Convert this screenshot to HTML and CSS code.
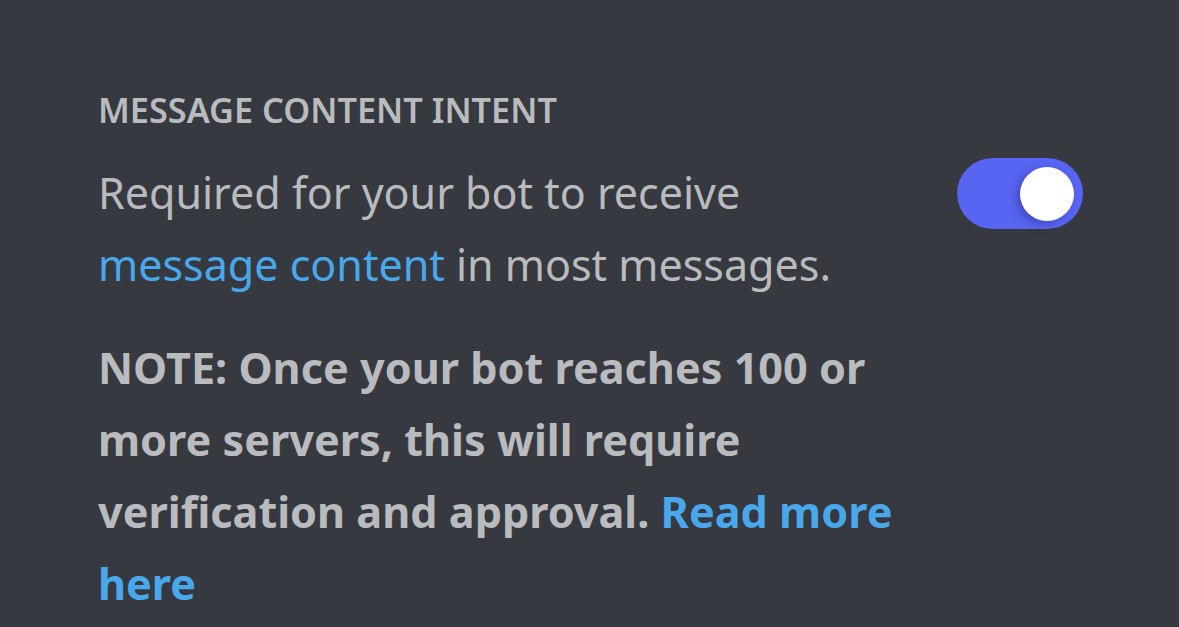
FILE: index.html
```html
<!DOCTYPE html>
<html>
<head>
<meta charset="utf-8">
<link rel="stylesheet" href="styles.css">
</head>
<body>
<div class="page">
  <h2 class="title">MESSAGE CONTENT INTENT</h2>
  <div class="row">
    <div class="text">
      <p class="desc">Required for your bot to receive <a class="link" href="#">message content</a> in most messages.</p>
      <p class="note">NOTE: Once your bot reaches 100 or more servers, this will require verification and approval. <a class="link" href="#">Read more here</a></p>
    </div>
    <div class="toggle"><div class="knob"></div></div>
  </div>
</div>
</body>
</html>
```
FILE: styles.css
```css
html, body {
  margin: 0;
  padding: 0;
  background: #36393f;
  height: 100%;
  overflow: hidden;
}
.page {
  padding: 88px 96px 0 98px;
  font-family: "Noto Sans", "Open Sans", sans-serif;
  color: #b9bbbe;
}
.title {
  margin: 0 0 25px 0;
  font-size: 34.3px;
  font-weight: 600;
  line-height: 44px;
  letter-spacing: 0;
}
.row {
  display: flex;
  justify-content: space-between;
  align-items: flex-start;
}
.text {
  width: 810px;
}
.desc {
  margin: 0 0 31px 0;
  font-size: 43px;
  line-height: 72px;
  font-weight: 400;
}
.note {
  margin: 0;
  font-size: 43.2px;
  line-height: 72px;
  font-weight: 700;
}
.link {
  color: #49a8ec;
  text-decoration: none;
}
.toggle {
  width: 126px;
  height: 71px;
  border-radius: 36px;
  background: #5865f2;
  display: flex;
  align-items: center;
  justify-content: flex-end;
  padding-right: 9px;
  box-sizing: border-box;
  margin-top: 1px;
}
.knob {
  width: 54px;
  height: 54px;
  border-radius: 50%;
  background: #ffffff;
  box-shadow: -4px 3px 8px rgba(30, 30, 90, 0.35);
}
```
